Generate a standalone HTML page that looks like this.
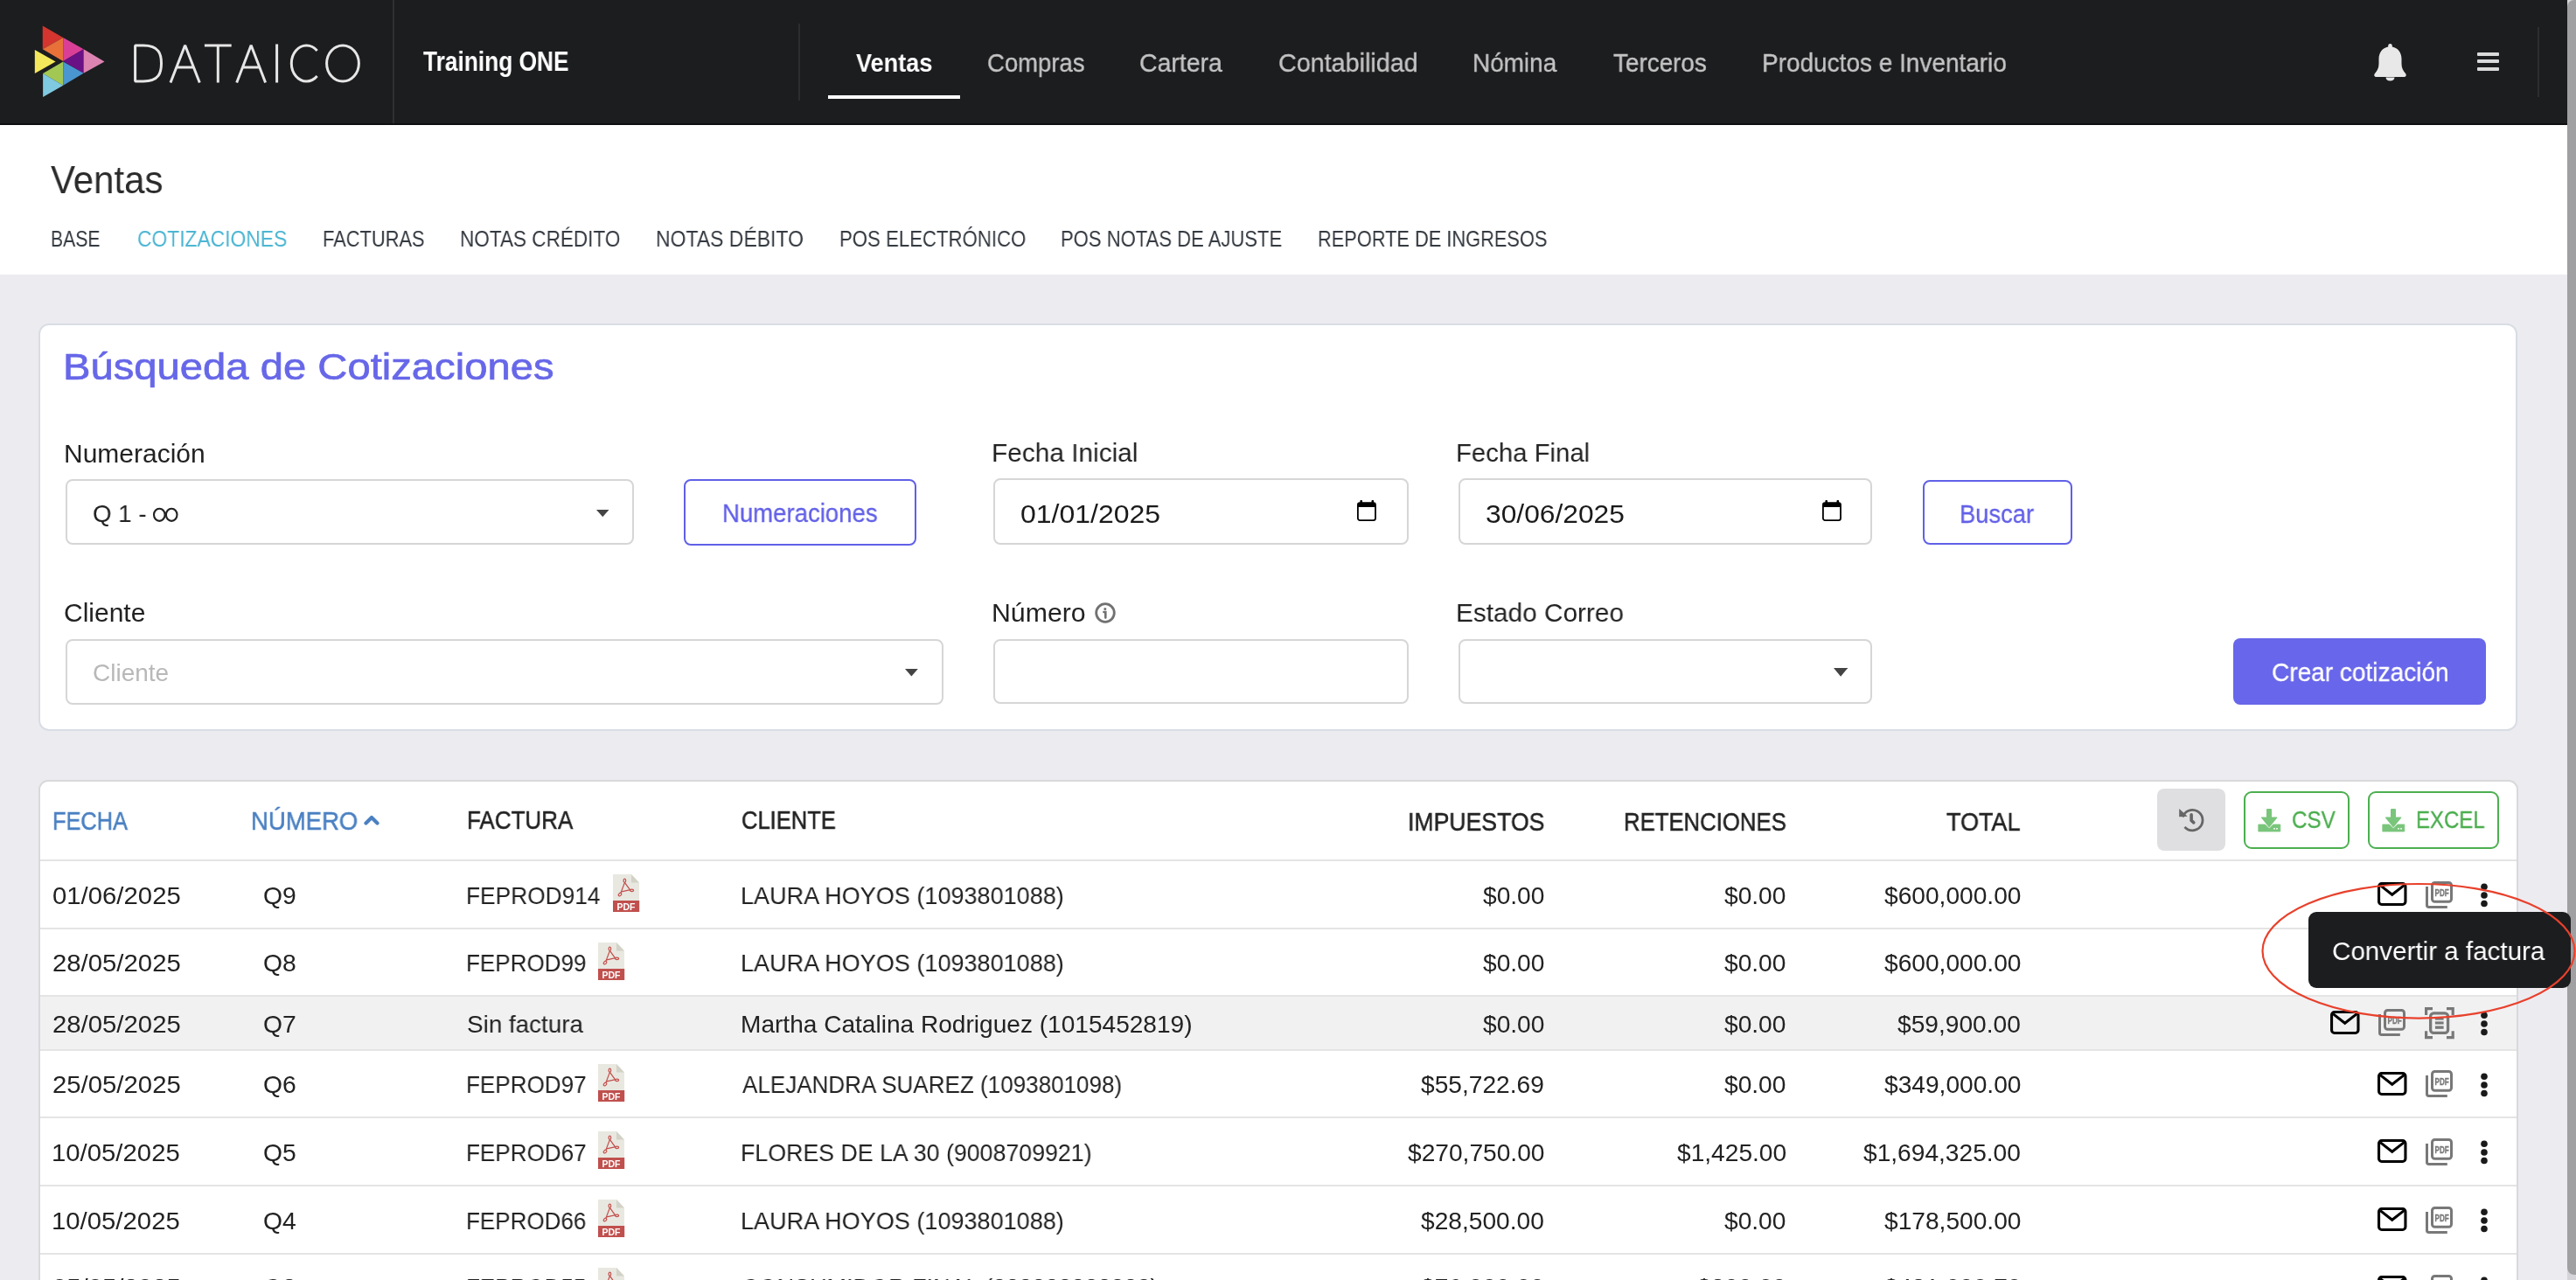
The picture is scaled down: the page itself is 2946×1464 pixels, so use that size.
<!DOCTYPE html>
<html><head><meta charset="utf-8"><title>Dataico - Cotizaciones</title>
<style>
html,body{margin:0;padding:0;}
body{width:2946px;height:1464px;overflow:hidden;position:relative;background:#ecebf0;font-family:"Liberation Sans",sans-serif;}
.t{position:absolute;white-space:nowrap;line-height:1;transform-origin:0 0;will-change:transform;}
.b{position:absolute;display:block;}
svg.b{will-change:transform;}
</style></head><body>
<div class="b" style="left:0.00px;top:0.00px;width:2936.00px;height:141.00px;background:#1c1d1f;"></div>
<div class="b" style="left:0.00px;top:141.00px;width:2936.00px;height:1.50px;background:#0e0f11;"></div>
<div class="b" style="left:449.00px;top:0.00px;width:2.00px;height:141.00px;background:#2f3032;"></div>
<div class="b" style="left:913.00px;top:26.50px;width:2.00px;height:88.00px;background:#2c2d2f;"></div>
<div class="b" style="left:2902.00px;top:31.00px;width:2.00px;height:80.00px;background:#2c2d2f;"></div>
<svg class="b" style="left:0;top:0" width="140" height="141" viewBox="0 0 140 141"><polygon fill="#d4352f" points="48.75,29.40 72.20,43.00 48.75,56.30"/><polygon fill="#e8713a" points="48.75,56.30 72.20,43.00 72.20,70.00"/><polygon fill="#da3f97" points="72.20,43.00 95.60,56.30 72.20,70.00"/><polygon fill="#6b1186" points="72.20,70.00 95.60,56.30 95.60,83.70"/><polygon fill="#dd83b2" points="95.60,56.30 119.50,70.40 95.60,83.70"/><polygon fill="#f3e85b" points="39.80,57.10 63.60,70.40 39.80,84.00"/><polygon fill="#a2c853" points="49.10,84.00 72.20,70.40 72.20,97.70"/><polygon fill="#4996d0" points="72.20,70.40 95.60,83.70 72.20,97.70"/><polygon fill="#7fc9e1" points="49.10,84.00 72.20,97.70 49.10,111.00"/></svg>
<svg class="b" style="left:0;top:0" width="440" height="141" viewBox="0 0 440 141"><path fill="none" stroke="#e6e6e6" stroke-width="3" stroke-linejoin="bevel" d="M154.6,52.0 L154.6,93.0 L164,93.0 C182,93.0 184.5,83.0 184.5,72.5 C184.5,62.0 182,52.0 164,52.0 Z M195.0,94.5 L211.65,51.8 L228.3,94.5 M200.76,77 L222.54000000000002,77 M233.9,52.0 L264.7,52.0 M249.3,52.0 L249.3,94.5 M270.7,94.5 L287.15,51.8 L303.6,94.5 M276.38,77 L297.92,77 M316.6,50.5 L316.6,94.5"/><path fill="none" stroke="#e6e6e6" stroke-width="3" d="M362.66,58.00 A17.20,20.50 0 1 0 362.66,87.00"/><ellipse fill="none" stroke="#e6e6e6" stroke-width="3" cx="392.0" cy="72.5" rx="18.399999999999977" ry="20.5"/></svg>
<div class="t" style="left:483.54px;top:55.14px;font-size:31px;color:#ffffff;font-weight:700;transform:scaleX(0.8479);">Training ONE</div>
<div class="t" style="left:979.46px;top:56.69px;font-size:30px;color:#ffffff;font-weight:700;transform:scaleX(0.9036);">Ventas</div>
<div class="t" style="left:1129.23px;top:56.69px;font-size:30px;color:#c4c4c4;transform:scaleX(0.9160);-webkit-text-stroke:0.35px #c4c4c4;">Compras</div>
<div class="t" style="left:1303.48px;top:56.69px;font-size:30px;color:#c4c4c4;transform:scaleX(0.9488);-webkit-text-stroke:0.35px #c4c4c4;">Cartera</div>
<div class="t" style="left:1462.26px;top:56.69px;font-size:30px;color:#c4c4c4;transform:scaleX(0.9575);-webkit-text-stroke:0.35px #c4c4c4;">Contabilidad</div>
<div class="t" style="left:1684.07px;top:56.69px;font-size:30px;color:#c4c4c4;transform:scaleX(0.9302);-webkit-text-stroke:0.35px #c4c4c4;">Nómina</div>
<div class="t" style="left:1845.04px;top:56.69px;font-size:30px;color:#c4c4c4;transform:scaleX(0.9286);-webkit-text-stroke:0.35px #c4c4c4;">Terceros</div>
<div class="t" style="left:2015.06px;top:56.69px;font-size:30px;color:#c4c4c4;transform:scaleX(0.9324);-webkit-text-stroke:0.35px #c4c4c4;">Productos e Inventario</div>
<div class="b" style="left:947.00px;top:109.00px;width:151.00px;height:4.00px;background:#ffffff;"></div>
<svg class="b" style="left:2714px;top:49px" width="39" height="44" viewBox="0 0 39 44"><path fill="#e8e8e8" d="M19.5,1 C21,1 21.8,2 21.8,3.4 L21.8,4.6 C28.5,5.9 32.5,11.5 32.5,18.5 L32.5,24 C32.5,29 34.5,32 37,35 C38.6,37 37.6,39 35,39 L4,39 C1.4,39 0.4,37 2,35 C4.5,32 6.5,29 6.5,24 L6.5,18.5 C6.5,11.5 10.5,5.9 17.2,4.6 L17.2,3.4 C17.2,2 18,1 19.5,1 Z M14.5,39.5 L24.5,39.5 C24.5,42 22.3,43.5 19.5,43.5 C16.7,43.5 14.5,42 14.5,39.5 Z"/></svg>
<div class="b" style="left:2833.00px;top:59.90px;width:25.00px;height:4.10px;background:#dadada;border-radius:1px;"></div>
<div class="b" style="left:2833.00px;top:68.30px;width:25.00px;height:4.10px;background:#dadada;border-radius:1px;"></div>
<div class="b" style="left:2833.00px;top:77.00px;width:25.00px;height:4.10px;background:#dadada;border-radius:1px;"></div>
<div class="b" style="left:0.00px;top:142.50px;width:2936.00px;height:171.50px;background:#ffffff;"></div>
<div class="t" style="left:57.69px;top:182.88px;font-size:45px;color:#2b2b2b;transform:scaleX(0.9345);">Ventas</div>
<div class="t" style="left:58.21px;top:259.98px;font-size:26px;color:#353a41;transform:scaleX(0.8146);">BASE</div>
<div class="t" style="left:156.96px;top:259.98px;font-size:26px;color:#4cb6d3;transform:scaleX(0.8783);">COTIZACIONES</div>
<div class="t" style="left:368.95px;top:259.98px;font-size:26px;color:#353a41;transform:scaleX(0.8409);">FACTURAS</div>
<div class="t" style="left:526.20px;top:259.98px;font-size:26px;color:#353a41;transform:scaleX(0.8672);">NOTAS CRÉDITO</div>
<div class="t" style="left:750.16px;top:259.98px;font-size:26px;color:#353a41;transform:scaleX(0.8837);">NOTAS DÉBITO</div>
<div class="t" style="left:959.53px;top:259.98px;font-size:26px;color:#353a41;transform:scaleX(0.8532);">POS ELECTRÓNICO</div>
<div class="t" style="left:1213.44px;top:259.98px;font-size:26px;color:#353a41;transform:scaleX(0.8478);">POS NOTAS DE AJUSTE</div>
<div class="t" style="left:1506.96px;top:259.98px;font-size:26px;color:#353a41;transform:scaleX(0.8383);">REPORTE DE INGRESOS</div>
<div class="b" style="left:44.00px;top:370.00px;width:2835.00px;height:466.00px;background:#fff;border:2px solid #d9dde4;border-radius:12px;box-sizing:border-box;"></div>
<div class="t" style="left:72.02px;top:397.88px;font-size:43px;color:#6767e9;transform:scaleX(1.0976);-webkit-text-stroke:0.7px #6767e9;">Búsqueda de Cotizaciones</div>
<div class="t" style="left:73.30px;top:503.59px;font-size:30px;color:#222222;">Numeración</div>
<div class="t" style="left:1133.91px;top:502.59px;font-size:30px;color:#222222;transform:scaleX(0.9942);">Fecha Inicial</div>
<div class="t" style="left:1665.36px;top:502.59px;font-size:30px;color:#222222;transform:scaleX(0.9770);">Fecha Final</div>
<div class="t" style="left:72.90px;top:685.99px;font-size:30px;color:#222222;">Cliente</div>
<div class="t" style="left:1133.88px;top:685.69px;font-size:30px;color:#222222;transform:scaleX(1.0092);">Número</div>
<div class="t" style="left:1665.32px;top:685.69px;font-size:30px;color:#222222;transform:scaleX(0.9924);">Estado Correo</div>
<div class="b" style="left:75.00px;top:548.40px;width:649.70px;height:75.00px;background:#fff;border:2px solid #d6d6d6;border-radius:8px;box-sizing:border-box;"></div>
<div class="b" style="left:1136.30px;top:546.60px;width:474.40px;height:76.70px;background:#fff;border:2px solid #d6d6d6;border-radius:8px;box-sizing:border-box;"></div>
<div class="b" style="left:1667.70px;top:546.60px;width:473.30px;height:76.70px;background:#fff;border:2px solid #d6d6d6;border-radius:8px;box-sizing:border-box;"></div>
<div class="b" style="left:75.00px;top:730.50px;width:1004.00px;height:75.00px;background:#fff;border:2px solid #d6d6d6;border-radius:8px;box-sizing:border-box;"></div>
<div class="b" style="left:1136.30px;top:730.80px;width:474.40px;height:74.70px;background:#fff;border:2px solid #d6d6d6;border-radius:8px;box-sizing:border-box;"></div>
<div class="b" style="left:1667.70px;top:730.80px;width:473.30px;height:74.70px;background:#fff;border:2px solid #d6d6d6;border-radius:8px;box-sizing:border-box;"></div>
<div class="b" style="left:782.20px;top:548.10px;width:265.60px;height:75.80px;background:#fff;border:2px solid #6060e8;border-radius:8px;box-sizing:border-box;"></div>
<div class="b" style="left:2198.70px;top:548.60px;width:171.00px;height:74.70px;background:#fff;border:2px solid #6060e8;border-radius:8px;box-sizing:border-box;"></div>
<div class="b" style="left:2554.00px;top:730.00px;width:289.00px;height:75.70px;background:#6866ea;border-radius:8px;"></div>
<div class="t" style="left:105.75px;top:573.58px;font-size:28px;color:#222;transform:scaleX(0.9886);">Q 1 -</div>
<svg class="b" style="left:174px;top:579px" width="32" height="20" viewBox="0 0 32 20"><ellipse cx="8.3" cy="9.8" rx="6.3" ry="7.1" fill="none" stroke="#222" stroke-width="2.1"/><ellipse cx="22.2" cy="9.8" rx="6.3" ry="7.1" fill="none" stroke="#222" stroke-width="2.1"/></svg>
<div class="t" style="left:105.60px;top:756.28px;font-size:28px;color:#b8b8b8;">Cliente</div>
<div class="t" style="left:825.80px;top:571.69px;font-size:30px;color:#6260e7;transform:scaleX(0.9182);-webkit-text-stroke:0.3px #6260e7;">Numeraciones</div>
<div class="t" style="left:2240.82px;top:572.89px;font-size:30px;color:#6260e7;transform:scaleX(0.9099);-webkit-text-stroke:0.3px #6260e7;">Buscar</div>
<div class="t" style="left:2597.60px;top:753.99px;font-size:30px;color:#ffffff;transform:scaleX(0.9348);-webkit-text-stroke:0.3px #ffffff;">Crear cotización</div>
<div class="t" style="left:1166.82px;top:574.04px;font-size:29px;color:#1a1a1a;transform:scaleX(1.1027);">01/01/2025</div>
<div class="t" style="left:1699.33px;top:574.04px;font-size:29px;color:#1a1a1a;transform:scaleX(1.0950);">30/06/2025</div>
<svg class="b" style="left:681.7px;top:583.3px" width="14.5" height="8.200000000000045" viewBox="0 0 14.5 8.200000000000045"><polygon fill="#444" points="0,0 14.5,0 7.25,8.200000000000045"/></svg>
<svg class="b" style="left:1035.2px;top:764.5px" width="14.799999999999955" height="8.5" viewBox="0 0 14.799999999999955 8.5"><polygon fill="#444" points="0,0 14.799999999999955,0 7.399999999999977,8.5"/></svg>
<svg class="b" style="left:2097.2px;top:764px" width="16.200000000000273" height="9.700000000000045" viewBox="0 0 16.200000000000273 9.700000000000045"><polygon fill="#444" points="0,0 16.200000000000273,0 8.100000000000136,9.700000000000045"/></svg>
<svg class="b" style="left:1552.1px;top:571.9px" width="24" height="26" viewBox="0 0 24 26"><rect x="0.9" y="3.1" width="20.1" height="20" rx="2.3" fill="none" stroke="#000" stroke-width="1.8"/><rect x="0.9" y="3" width="20.1" height="5" fill="#000"/><rect x="3.4" y="0" width="2.6" height="4" rx="1" fill="#000"/><rect x="16.5" y="0" width="2.6" height="4" rx="1" fill="#000"/></svg>
<svg class="b" style="left:2083.5px;top:571.9px" width="24" height="26" viewBox="0 0 24 26"><rect x="0.9" y="3.1" width="20.1" height="20" rx="2.3" fill="none" stroke="#000" stroke-width="1.8"/><rect x="0.9" y="3" width="20.1" height="5" fill="#000"/><rect x="3.4" y="0" width="2.6" height="4" rx="1" fill="#000"/><rect x="16.5" y="0" width="2.6" height="4" rx="1" fill="#000"/></svg>
<svg class="b" style="left:1252px;top:689px" width="24" height="24" viewBox="0 0 24 24"><circle cx="12" cy="12" r="10.3" fill="none" stroke="#717171" stroke-width="2.8"/><circle cx="11.8" cy="7.4" r="1.5" fill="#717171"/><path d="M10.4,11 L12.3,11 L12.3,17.5" fill="none" stroke="#717171" stroke-width="2.6" stroke-linecap="round"/></svg>
<div class="b" style="left:44.00px;top:891.70px;width:2836.00px;height:708.30px;background:#fff;border:2px solid #d9d9db;border-radius:11px;box-sizing:border-box;"></div>
<div class="b" style="left:46.00px;top:983.00px;width:2832.00px;height:2.00px;background:#e4e4e4;"></div>
<div class="t" style="left:60.17px;top:924.74px;font-size:29px;color:#4a80c2;transform:scaleX(0.8743);-webkit-text-stroke:0.5px #4a80c2;">FECHA</div>
<div class="t" style="left:286.80px;top:924.74px;font-size:29px;color:#4a80c2;transform:scaleX(0.9486);-webkit-text-stroke:0.5px #4a80c2;">NÚMERO</div>
<svg class="b" style="left:416px;top:931px" width="18" height="13" viewBox="0 0 18 13"><path d="M2.5,10.5 L9,4 L15.5,10.5" fill="none" stroke="#4a80c2" stroke-width="4.2" stroke-linecap="round" stroke-linejoin="round"/></svg>
<div class="t" style="left:533.92px;top:924.34px;font-size:29px;color:#222222;transform:scaleX(0.8965);-webkit-text-stroke:0.5px #222222;">FACTURA</div>
<div class="t" style="left:847.72px;top:924.34px;font-size:29px;color:#222222;transform:scaleX(0.8800);-webkit-text-stroke:0.5px #222222;">CLIENTE</div>
<div class="t" style="left:1609.90px;top:925.74px;font-size:29px;color:#222222;transform:scaleX(0.9181);-webkit-text-stroke:0.5px #222222;">IMPUESTOS</div>
<div class="t" style="left:1857.14px;top:925.74px;font-size:29px;color:#222222;transform:scaleX(0.8870);-webkit-text-stroke:0.5px #222222;">RETENCIONES</div>
<div class="t" style="left:2226.36px;top:925.74px;font-size:29px;color:#222222;transform:scaleX(0.9304);-webkit-text-stroke:0.5px #222222;">TOTAL</div>
<div class="b" style="left:2467.00px;top:901.90px;width:77.80px;height:71.60px;background:#dfdfe1;border-radius:8px;"></div>
<svg class="b" style="left:2488px;top:920px" width="36" height="36" viewBox="0 0 36 36"><path d="M8.2,14.5 A11.7,11.7 0 1 1 10.5,25.8" fill="none" stroke="#666" stroke-width="2.8"/><polygon fill="#666" points="4.2,5 13.7,13.75 4.2,14.3"/><path d="M18.1,11.8 L18.1,18.4 L20.8,20.8" fill="none" stroke="#666" stroke-width="3.6" stroke-linecap="round" stroke-linejoin="round"/></svg>
<div class="b" style="left:2566.00px;top:905.40px;width:120.70px;height:66.00px;background:#fff;border:2px solid #4caf50;border-radius:9px;box-sizing:border-box;"></div>
<div class="b" style="left:2708.20px;top:905.40px;width:149.70px;height:66.00px;background:#fff;border:2px solid #4caf50;border-radius:9px;box-sizing:border-box;"></div>
<svg class="b" style="left:2582px;top:925px" width="27" height="27" viewBox="0 0 27 27"><rect x="10" y="0" width="6" height="12" rx="1" fill="#7ac57c"/><polygon points="4.6,10 21.7,10 13.1,20.6" fill="#7ac57c" stroke="#7ac57c" stroke-width="1.2" stroke-linejoin="round"/><path d="M0.8,18 L8.5,18 L13.1,22.6 L17.7,18 L25.8,18 L25.8,26 L0.8,26 Z" fill="#7ac57c" stroke="#7ac57c" stroke-width="0.8" stroke-linejoin="round"/><rect x="18.2" y="22" width="1.6" height="1.6" fill="#fff"/><rect x="21.2" y="22" width="1.6" height="1.6" fill="#fff"/></svg>
<svg class="b" style="left:2723.8px;top:925px" width="27" height="27" viewBox="0 0 27 27"><rect x="10" y="0" width="6" height="12" rx="1" fill="#7ac57c"/><polygon points="4.6,10 21.7,10 13.1,20.6" fill="#7ac57c" stroke="#7ac57c" stroke-width="1.2" stroke-linejoin="round"/><path d="M0.8,18 L8.5,18 L13.1,22.6 L17.7,18 L25.8,18 L25.8,26 L0.8,26 Z" fill="#7ac57c" stroke="#7ac57c" stroke-width="0.8" stroke-linejoin="round"/><rect x="18.2" y="22" width="1.6" height="1.6" fill="#fff"/><rect x="21.2" y="22" width="1.6" height="1.6" fill="#fff"/></svg>
<div class="t" style="left:2621.39px;top:924.36px;font-size:27.5px;color:#4cae4f;transform:scaleX(0.8800);-webkit-text-stroke:0.3px #4cae4f;">CSV</div>
<div class="t" style="left:2763.38px;top:924.36px;font-size:27.5px;color:#4cae4f;transform:scaleX(0.8718);-webkit-text-stroke:0.3px #4cae4f;">EXCEL</div>
<div class="b" style="left:46.00px;top:1061.00px;width:2832.00px;height:2.00px;background:#e4e4e4;"></div>
<div class="t" style="left:59.93px;top:1010.58px;font-size:28px;color:#222222;transform:scaleX(1.0471);">01/06/2025</div>
<div class="t" style="left:301.43px;top:1010.58px;font-size:28px;color:#222222;transform:scaleX(1.0098);">Q9</div>
<div class="t" style="left:532.90px;top:1010.58px;font-size:28px;color:#222222;transform:scaleX(0.9395);">FEPROD914</div>
<svg class="b" style="left:700.6px;top:1000px" width="31" height="43" viewBox="0 0 31 43"><path d="M0,0 L21,0 L30,9.4 L30,30 L0,30 Z" fill="#e8e8e1"/><path d="M21,0 L30,9.4 L21,9.4 Z" fill="#d3d2c6"/><rect x="0" y="30" width="30.2" height="13" fill="#c0504d"/><text x="15" y="41" text-anchor="middle" font-family="Liberation Sans" font-weight="700" font-size="10.5" fill="#fff">PDF</text><g fill="none" stroke="#c44f4b" stroke-width="1.25"><ellipse cx="13.4" cy="7.3" rx="1.3" ry="2.1"/><path d="M13.4,9.4 L8.8,21.6 M13.4,9.4 L19.8,18.2 M9.8,19.8 L20.2,17.6"/><ellipse cx="8" cy="23.1" rx="2.1" ry="1.4" transform="rotate(-45 8 23.1)"/><ellipse cx="21.6" cy="18.3" rx="2" ry="1.3"/></g></svg>
<div class="t" style="left:846.84px;top:1010.58px;font-size:28px;color:#222222;transform:scaleX(0.9658);">LAURA HOYOS (1093801088)</div>
<div class="t" style="left:1695.66px;top:1010.58px;font-size:28px;color:#222222;transform:scaleX(1.0046);">$0.00</div>
<div class="t" style="left:1972.36px;top:1010.58px;font-size:28px;color:#222222;transform:scaleX(1.0046);">$0.00</div>
<div class="t" style="left:2154.58px;top:1010.58px;font-size:28px;color:#222222;transform:scaleX(1.0046);">$600,000.00</div>
<div class="b" style="left:46.00px;top:1138.00px;width:2832.00px;height:2.00px;background:#e4e4e4;"></div>
<div class="t" style="left:59.63px;top:1088.08px;font-size:28px;color:#222222;transform:scaleX(1.0471);">28/05/2025</div>
<div class="t" style="left:301.43px;top:1088.08px;font-size:28px;color:#222222;transform:scaleX(1.0098);">Q8</div>
<div class="t" style="left:532.92px;top:1088.08px;font-size:28px;color:#222222;transform:scaleX(0.9297);">FEPROD99</div>
<svg class="b" style="left:684.2px;top:1078px" width="31" height="43" viewBox="0 0 31 43"><path d="M0,0 L21,0 L30,9.4 L30,30 L0,30 Z" fill="#e8e8e1"/><path d="M21,0 L30,9.4 L21,9.4 Z" fill="#d3d2c6"/><rect x="0" y="30" width="30.2" height="13" fill="#c0504d"/><text x="15" y="41" text-anchor="middle" font-family="Liberation Sans" font-weight="700" font-size="10.5" fill="#fff">PDF</text><g fill="none" stroke="#c44f4b" stroke-width="1.25"><ellipse cx="13.4" cy="7.3" rx="1.3" ry="2.1"/><path d="M13.4,9.4 L8.8,21.6 M13.4,9.4 L19.8,18.2 M9.8,19.8 L20.2,17.6"/><ellipse cx="8" cy="23.1" rx="2.1" ry="1.4" transform="rotate(-45 8 23.1)"/><ellipse cx="21.6" cy="18.3" rx="2" ry="1.3"/></g></svg>
<div class="t" style="left:846.84px;top:1088.08px;font-size:28px;color:#222222;transform:scaleX(0.9658);">LAURA HOYOS (1093801088)</div>
<div class="t" style="left:1695.66px;top:1088.08px;font-size:28px;color:#222222;transform:scaleX(1.0046);">$0.00</div>
<div class="t" style="left:1972.36px;top:1088.08px;font-size:28px;color:#222222;transform:scaleX(1.0046);">$0.00</div>
<div class="t" style="left:2154.58px;top:1088.08px;font-size:28px;color:#222222;transform:scaleX(1.0046);">$600,000.00</div>
<div class="b" style="left:46.00px;top:1140.00px;width:2832.00px;height:60.00px;background:#f1f1f2;"></div>
<div class="b" style="left:46.00px;top:1200.00px;width:2832.00px;height:2.00px;background:#e4e4e4;"></div>
<div class="t" style="left:59.63px;top:1157.58px;font-size:28px;color:#222222;transform:scaleX(1.0471);">28/05/2025</div>
<div class="t" style="left:301.43px;top:1157.58px;font-size:28px;color:#222222;transform:scaleX(1.0098);">Q7</div>
<div class="t" style="left:533.75px;top:1157.58px;font-size:28px;color:#222222;transform:scaleX(0.9934);">Sin factura</div>
<div class="t" style="left:846.75px;top:1157.58px;font-size:28px;color:#222222;transform:scaleX(1.0026);">Martha Catalina Rodriguez (1015452819)</div>
<div class="t" style="left:1695.66px;top:1157.58px;font-size:28px;color:#222222;transform:scaleX(1.0046);">$0.00</div>
<div class="t" style="left:1972.36px;top:1157.58px;font-size:28px;color:#222222;transform:scaleX(1.0046);">$0.00</div>
<div class="t" style="left:2170.19px;top:1157.58px;font-size:28px;color:#222222;transform:scaleX(1.0046);">$59,900.00</div>
<div class="b" style="left:46.00px;top:1277.00px;width:2832.00px;height:2.00px;background:#e4e4e4;"></div>
<div class="t" style="left:59.63px;top:1227.08px;font-size:28px;color:#222222;transform:scaleX(1.0471);">25/05/2025</div>
<div class="t" style="left:301.43px;top:1227.08px;font-size:28px;color:#222222;transform:scaleX(1.0098);">Q6</div>
<div class="t" style="left:532.92px;top:1227.08px;font-size:28px;color:#222222;transform:scaleX(0.9307);">FEPROD97</div>
<svg class="b" style="left:684.2px;top:1217px" width="31" height="43" viewBox="0 0 31 43"><path d="M0,0 L21,0 L30,9.4 L30,30 L0,30 Z" fill="#e8e8e1"/><path d="M21,0 L30,9.4 L21,9.4 Z" fill="#d3d2c6"/><rect x="0" y="30" width="30.2" height="13" fill="#c0504d"/><text x="15" y="41" text-anchor="middle" font-family="Liberation Sans" font-weight="700" font-size="10.5" fill="#fff">PDF</text><g fill="none" stroke="#c44f4b" stroke-width="1.25"><ellipse cx="13.4" cy="7.3" rx="1.3" ry="2.1"/><path d="M13.4,9.4 L8.8,21.6 M13.4,9.4 L19.8,18.2 M9.8,19.8 L20.2,17.6"/><ellipse cx="8" cy="23.1" rx="2.1" ry="1.4" transform="rotate(-45 8 23.1)"/><ellipse cx="21.6" cy="18.3" rx="2" ry="1.3"/></g></svg>
<div class="t" style="left:849.00px;top:1227.08px;font-size:28px;color:#222222;transform:scaleX(0.9299);">ALEJANDRA SUAREZ (1093801098)</div>
<div class="t" style="left:1625.48px;top:1227.08px;font-size:28px;color:#222222;transform:scaleX(1.0046);">$55,722.69</div>
<div class="t" style="left:1972.36px;top:1227.08px;font-size:28px;color:#222222;transform:scaleX(1.0046);">$0.00</div>
<div class="t" style="left:2154.58px;top:1227.08px;font-size:28px;color:#222222;transform:scaleX(1.0046);">$349,000.00</div>
<div class="b" style="left:46.00px;top:1355.00px;width:2832.00px;height:2.00px;background:#e4e4e4;"></div>
<div class="t" style="left:58.90px;top:1304.58px;font-size:28px;color:#222222;transform:scaleX(1.0471);">10/05/2025</div>
<div class="t" style="left:301.43px;top:1304.58px;font-size:28px;color:#222222;transform:scaleX(1.0098);">Q5</div>
<div class="t" style="left:532.92px;top:1304.58px;font-size:28px;color:#222222;transform:scaleX(0.9307);">FEPROD67</div>
<svg class="b" style="left:684.2px;top:1294px" width="31" height="43" viewBox="0 0 31 43"><path d="M0,0 L21,0 L30,9.4 L30,30 L0,30 Z" fill="#e8e8e1"/><path d="M21,0 L30,9.4 L21,9.4 Z" fill="#d3d2c6"/><rect x="0" y="30" width="30.2" height="13" fill="#c0504d"/><text x="15" y="41" text-anchor="middle" font-family="Liberation Sans" font-weight="700" font-size="10.5" fill="#fff">PDF</text><g fill="none" stroke="#c44f4b" stroke-width="1.25"><ellipse cx="13.4" cy="7.3" rx="1.3" ry="2.1"/><path d="M13.4,9.4 L8.8,21.6 M13.4,9.4 L19.8,18.2 M9.8,19.8 L20.2,17.6"/><ellipse cx="8" cy="23.1" rx="2.1" ry="1.4" transform="rotate(-45 8 23.1)"/><ellipse cx="21.6" cy="18.3" rx="2" ry="1.3"/></g></svg>
<div class="t" style="left:846.86px;top:1304.58px;font-size:28px;color:#222222;transform:scaleX(0.9555);">FLORES DE LA 30 (9008709921)</div>
<div class="t" style="left:1609.58px;top:1304.58px;font-size:28px;color:#222222;transform:scaleX(1.0046);">$270,750.00</div>
<div class="t" style="left:1917.51px;top:1304.58px;font-size:28px;color:#222222;transform:scaleX(1.0046);">$1,425.00</div>
<div class="t" style="left:2131.09px;top:1304.58px;font-size:28px;color:#222222;transform:scaleX(1.0046);">$1,694,325.00</div>
<div class="b" style="left:46.00px;top:1433.00px;width:2832.00px;height:2.00px;background:#e4e4e4;"></div>
<div class="t" style="left:58.90px;top:1382.58px;font-size:28px;color:#222222;transform:scaleX(1.0471);">10/05/2025</div>
<div class="t" style="left:301.43px;top:1382.58px;font-size:28px;color:#222222;transform:scaleX(1.0098);">Q4</div>
<div class="t" style="left:532.92px;top:1382.58px;font-size:28px;color:#222222;transform:scaleX(0.9288);">FEPROD66</div>
<svg class="b" style="left:684.2px;top:1372px" width="31" height="43" viewBox="0 0 31 43"><path d="M0,0 L21,0 L30,9.4 L30,30 L0,30 Z" fill="#e8e8e1"/><path d="M21,0 L30,9.4 L21,9.4 Z" fill="#d3d2c6"/><rect x="0" y="30" width="30.2" height="13" fill="#c0504d"/><text x="15" y="41" text-anchor="middle" font-family="Liberation Sans" font-weight="700" font-size="10.5" fill="#fff">PDF</text><g fill="none" stroke="#c44f4b" stroke-width="1.25"><ellipse cx="13.4" cy="7.3" rx="1.3" ry="2.1"/><path d="M13.4,9.4 L8.8,21.6 M13.4,9.4 L19.8,18.2 M9.8,19.8 L20.2,17.6"/><ellipse cx="8" cy="23.1" rx="2.1" ry="1.4" transform="rotate(-45 8 23.1)"/><ellipse cx="21.6" cy="18.3" rx="2" ry="1.3"/></g></svg>
<div class="t" style="left:846.84px;top:1382.58px;font-size:28px;color:#222222;transform:scaleX(0.9658);">LAURA HOYOS (1093801088)</div>
<div class="t" style="left:1625.19px;top:1382.58px;font-size:28px;color:#222222;transform:scaleX(1.0046);">$28,500.00</div>
<div class="t" style="left:1972.36px;top:1382.58px;font-size:28px;color:#222222;transform:scaleX(1.0046);">$0.00</div>
<div class="t" style="left:2154.58px;top:1382.58px;font-size:28px;color:#222222;transform:scaleX(1.0046);">$178,500.00</div>
<div class="b" style="left:46.00px;top:1511.00px;width:2832.00px;height:2.00px;background:#e4e4e4;"></div>
<div class="t" style="left:59.93px;top:1459.38px;font-size:28px;color:#222222;transform:scaleX(1.0471);">05/05/2025</div>
<div class="t" style="left:301.43px;top:1459.38px;font-size:28px;color:#222222;transform:scaleX(1.0098);">Q3</div>
<div class="t" style="left:532.92px;top:1459.38px;font-size:28px;color:#222222;transform:scaleX(0.9288);">FEPROD55</div>
<svg class="b" style="left:684.2px;top:1450px" width="31" height="43" viewBox="0 0 31 43"><path d="M0,0 L21,0 L30,9.4 L30,30 L0,30 Z" fill="#e8e8e1"/><path d="M21,0 L30,9.4 L21,9.4 Z" fill="#d3d2c6"/><rect x="0" y="30" width="30.2" height="13" fill="#c0504d"/><text x="15" y="41" text-anchor="middle" font-family="Liberation Sans" font-weight="700" font-size="10.5" fill="#fff">PDF</text><g fill="none" stroke="#c44f4b" stroke-width="1.25"><ellipse cx="13.4" cy="7.3" rx="1.3" ry="2.1"/><path d="M13.4,9.4 L8.8,21.6 M13.4,9.4 L19.8,18.2 M9.8,19.8 L20.2,17.6"/><ellipse cx="8" cy="23.1" rx="2.1" ry="1.4" transform="rotate(-45 8 23.1)"/><ellipse cx="21.6" cy="18.3" rx="2" ry="1.3"/></g></svg>
<div class="t" style="left:847.65px;top:1459.38px;font-size:28px;color:#222222;transform:scaleX(0.9649);">CONSUMIDOR FINAL (222222222222)</div>
<div class="t" style="left:1625.19px;top:1459.38px;font-size:28px;color:#222222;transform:scaleX(1.0046);">$76,000.00</div>
<div class="t" style="left:1940.99px;top:1459.38px;font-size:28px;color:#222222;transform:scaleX(1.0046);">$800.00</div>
<div class="t" style="left:2154.58px;top:1459.38px;font-size:28px;color:#222222;transform:scaleX(1.0046);">$481,000.70</div>
<svg class="b" style="left:2719.25px;top:1009.1px" width="34" height="28" viewBox="0 0 34 28"><rect x="1.55" y="1.55" width="30.4" height="23.9" rx="3.2" fill="none" stroke="#000" stroke-width="3.1"/><path d="M3.2,3.6 L16.7,14.2 L30.3,3.6" fill="none" stroke="#000" stroke-width="3.1" stroke-linejoin="miter"/></svg>
<svg class="b" style="left:2774.25px;top:1007.5px" width="32" height="32" viewBox="0 0 32 32"><rect x="7.5" y="1.5" width="22" height="21.75" rx="3" fill="none" stroke="#787878" stroke-width="3"/><path d="M1.5,6 L1.5,27.3 Q1.5,29.6 3.8,29.6 L24.8,29.6" fill="none" stroke="#787878" stroke-width="3"/><text x="10.6" y="17.3" font-family="Liberation Sans" font-weight="700" font-size="11" textLength="16.2" lengthAdjust="spacingAndGlyphs" fill="#787878" stroke="#787878" stroke-width="0.35">PDF</text></svg>
<svg class="b" style="left:2835.5px;top:1009.0px" width="10" height="30" viewBox="0 0 10 30"><circle cx="5" cy="5.25" r="3.8" fill="#1a1a1a"/><circle cx="5" cy="15" r="3.8" fill="#1a1a1a"/><circle cx="5" cy="24.5" r="3.8" fill="#1a1a1a"/></svg>
<svg class="b" style="left:2719.25px;top:1086.6px" width="34" height="28" viewBox="0 0 34 28"><rect x="1.55" y="1.55" width="30.4" height="23.9" rx="3.2" fill="none" stroke="#000" stroke-width="3.1"/><path d="M3.2,3.6 L16.7,14.2 L30.3,3.6" fill="none" stroke="#000" stroke-width="3.1" stroke-linejoin="miter"/></svg>
<svg class="b" style="left:2774.25px;top:1085.0px" width="32" height="32" viewBox="0 0 32 32"><rect x="7.5" y="1.5" width="22" height="21.75" rx="3" fill="none" stroke="#787878" stroke-width="3"/><path d="M1.5,6 L1.5,27.3 Q1.5,29.6 3.8,29.6 L24.8,29.6" fill="none" stroke="#787878" stroke-width="3"/><text x="10.6" y="17.3" font-family="Liberation Sans" font-weight="700" font-size="11" textLength="16.2" lengthAdjust="spacingAndGlyphs" fill="#787878" stroke="#787878" stroke-width="0.35">PDF</text></svg>
<svg class="b" style="left:2835.5px;top:1086.5px" width="10" height="30" viewBox="0 0 10 30"><circle cx="5" cy="5.25" r="3.8" fill="#1a1a1a"/><circle cx="5" cy="15" r="3.8" fill="#1a1a1a"/><circle cx="5" cy="24.5" r="3.8" fill="#1a1a1a"/></svg>
<svg class="b" style="left:2665.2px;top:1156.3px" width="34" height="28" viewBox="0 0 34 28"><rect x="1.55" y="1.55" width="30.4" height="23.9" rx="3.2" fill="none" stroke="#000" stroke-width="3.1"/><path d="M3.2,3.6 L16.7,14.2 L30.3,3.6" fill="none" stroke="#000" stroke-width="3.1" stroke-linejoin="miter"/></svg>
<svg class="b" style="left:2720.3px;top:1153.9px" width="32" height="32" viewBox="0 0 32 32"><rect x="7.5" y="1.5" width="22" height="21.75" rx="3" fill="none" stroke="#787878" stroke-width="3"/><path d="M1.5,6 L1.5,27.3 Q1.5,29.6 3.8,29.6 L24.8,29.6" fill="none" stroke="#787878" stroke-width="3"/><text x="10.6" y="17.3" font-family="Liberation Sans" font-weight="700" font-size="11" textLength="16.2" lengthAdjust="spacingAndGlyphs" fill="#787878" stroke="#787878" stroke-width="0.35">PDF</text></svg>
<svg class="b" style="left:2773.2px;top:1151.9px" width="34" height="37" viewBox="0 0 34 37"><path d="M1.6,9 L1.6,1.6 L9,1.6 M25,1.6 L32.2,1.6 L32.2,9 M32.2,27.2 L32.2,34.6 L25,34.6 M9,34.6 L1.6,34.6 L1.6,27.2" fill="none" stroke="#787878" stroke-width="3.2"/><rect x="6.65" y="6.85" width="19.9" height="22.6" rx="3.5" fill="none" stroke="#787878" stroke-width="3.3"/><rect x="11.9" y="11.6" width="9.7" height="3" fill="#787878"/><rect x="11.9" y="16.4" width="9.7" height="3.1" fill="#787878"/><rect x="11.9" y="21.5" width="9.7" height="3.3" fill="#787878"/></svg>
<svg class="b" style="left:2835.5px;top:1155.6px" width="10" height="30" viewBox="0 0 10 30"><circle cx="5" cy="5.25" r="3.8" fill="#1a1a1a"/><circle cx="5" cy="15" r="3.8" fill="#1a1a1a"/><circle cx="5" cy="24.5" r="3.8" fill="#1a1a1a"/></svg>
<svg class="b" style="left:2719.25px;top:1225.6px" width="34" height="28" viewBox="0 0 34 28"><rect x="1.55" y="1.55" width="30.4" height="23.9" rx="3.2" fill="none" stroke="#000" stroke-width="3.1"/><path d="M3.2,3.6 L16.7,14.2 L30.3,3.6" fill="none" stroke="#000" stroke-width="3.1" stroke-linejoin="miter"/></svg>
<svg class="b" style="left:2774.25px;top:1224.0px" width="32" height="32" viewBox="0 0 32 32"><rect x="7.5" y="1.5" width="22" height="21.75" rx="3" fill="none" stroke="#787878" stroke-width="3"/><path d="M1.5,6 L1.5,27.3 Q1.5,29.6 3.8,29.6 L24.8,29.6" fill="none" stroke="#787878" stroke-width="3"/><text x="10.6" y="17.3" font-family="Liberation Sans" font-weight="700" font-size="11" textLength="16.2" lengthAdjust="spacingAndGlyphs" fill="#787878" stroke="#787878" stroke-width="0.35">PDF</text></svg>
<svg class="b" style="left:2835.5px;top:1225.5px" width="10" height="30" viewBox="0 0 10 30"><circle cx="5" cy="5.25" r="3.8" fill="#1a1a1a"/><circle cx="5" cy="15" r="3.8" fill="#1a1a1a"/><circle cx="5" cy="24.5" r="3.8" fill="#1a1a1a"/></svg>
<svg class="b" style="left:2719.25px;top:1303.1px" width="34" height="28" viewBox="0 0 34 28"><rect x="1.55" y="1.55" width="30.4" height="23.9" rx="3.2" fill="none" stroke="#000" stroke-width="3.1"/><path d="M3.2,3.6 L16.7,14.2 L30.3,3.6" fill="none" stroke="#000" stroke-width="3.1" stroke-linejoin="miter"/></svg>
<svg class="b" style="left:2774.25px;top:1301.5px" width="32" height="32" viewBox="0 0 32 32"><rect x="7.5" y="1.5" width="22" height="21.75" rx="3" fill="none" stroke="#787878" stroke-width="3"/><path d="M1.5,6 L1.5,27.3 Q1.5,29.6 3.8,29.6 L24.8,29.6" fill="none" stroke="#787878" stroke-width="3"/><text x="10.6" y="17.3" font-family="Liberation Sans" font-weight="700" font-size="11" textLength="16.2" lengthAdjust="spacingAndGlyphs" fill="#787878" stroke="#787878" stroke-width="0.35">PDF</text></svg>
<svg class="b" style="left:2835.5px;top:1303.0px" width="10" height="30" viewBox="0 0 10 30"><circle cx="5" cy="5.25" r="3.8" fill="#1a1a1a"/><circle cx="5" cy="15" r="3.8" fill="#1a1a1a"/><circle cx="5" cy="24.5" r="3.8" fill="#1a1a1a"/></svg>
<svg class="b" style="left:2719.25px;top:1381.1px" width="34" height="28" viewBox="0 0 34 28"><rect x="1.55" y="1.55" width="30.4" height="23.9" rx="3.2" fill="none" stroke="#000" stroke-width="3.1"/><path d="M3.2,3.6 L16.7,14.2 L30.3,3.6" fill="none" stroke="#000" stroke-width="3.1" stroke-linejoin="miter"/></svg>
<svg class="b" style="left:2774.25px;top:1379.5px" width="32" height="32" viewBox="0 0 32 32"><rect x="7.5" y="1.5" width="22" height="21.75" rx="3" fill="none" stroke="#787878" stroke-width="3"/><path d="M1.5,6 L1.5,27.3 Q1.5,29.6 3.8,29.6 L24.8,29.6" fill="none" stroke="#787878" stroke-width="3"/><text x="10.6" y="17.3" font-family="Liberation Sans" font-weight="700" font-size="11" textLength="16.2" lengthAdjust="spacingAndGlyphs" fill="#787878" stroke="#787878" stroke-width="0.35">PDF</text></svg>
<svg class="b" style="left:2835.5px;top:1381.0px" width="10" height="30" viewBox="0 0 10 30"><circle cx="5" cy="5.25" r="3.8" fill="#1a1a1a"/><circle cx="5" cy="15" r="3.8" fill="#1a1a1a"/><circle cx="5" cy="24.5" r="3.8" fill="#1a1a1a"/></svg>
<svg class="b" style="left:2719.25px;top:1459.1px" width="34" height="28" viewBox="0 0 34 28"><rect x="1.55" y="1.55" width="30.4" height="23.9" rx="3.2" fill="none" stroke="#000" stroke-width="3.1"/><path d="M3.2,3.6 L16.7,14.2 L30.3,3.6" fill="none" stroke="#000" stroke-width="3.1" stroke-linejoin="miter"/></svg>
<svg class="b" style="left:2774.25px;top:1457.5px" width="32" height="32" viewBox="0 0 32 32"><rect x="7.5" y="1.5" width="22" height="21.75" rx="3" fill="none" stroke="#787878" stroke-width="3"/><path d="M1.5,6 L1.5,27.3 Q1.5,29.6 3.8,29.6 L24.8,29.6" fill="none" stroke="#787878" stroke-width="3"/><text x="10.6" y="17.3" font-family="Liberation Sans" font-weight="700" font-size="11" textLength="16.2" lengthAdjust="spacingAndGlyphs" fill="#787878" stroke="#787878" stroke-width="0.35">PDF</text></svg>
<svg class="b" style="left:2835.5px;top:1459.0px" width="10" height="30" viewBox="0 0 10 30"><circle cx="5" cy="5.25" r="3.8" fill="#1a1a1a"/><circle cx="5" cy="15" r="3.8" fill="#1a1a1a"/><circle cx="5" cy="24.5" r="3.8" fill="#1a1a1a"/></svg>
<div class="b" style="left:2936.00px;top:0.00px;width:10.00px;height:1464.00px;background:#d5d4d8;"></div>
<div class="b" style="left:2936.00px;top:0.00px;width:26.00px;height:1457.80px;background:#a0a0a2;border-radius:8px;"></div>
<div class="b" style="left:2640.00px;top:1043.30px;width:300.00px;height:86.40px;background:#1c1d1f;border-radius:9px;"></div>
<div class="t" style="left:2667.42px;top:1072.59px;font-size:30px;color:#ffffff;transform:scaleX(0.9863);">Convertir a factura</div>
<svg class="b" style="left:2560px;top:1000px" width="386" height="180" viewBox="2560 1000 386 180"><ellipse cx="2766" cy="1087.8" rx="178.5" ry="76.8" fill="none" stroke="#e8412c" stroke-width="2.2"/></svg>
</body></html>
